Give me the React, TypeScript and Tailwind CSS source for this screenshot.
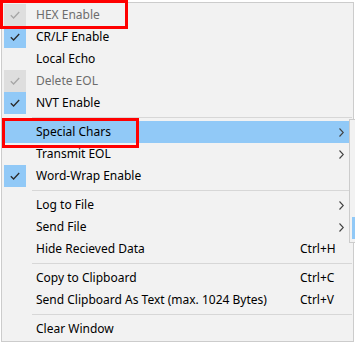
import React from 'react';

type Item =
  | { sep: true }
  | {
      sep?: false;
      label: string;
      check?: 'on' | 'off';
      disabled?: boolean;
      active?: boolean;
      sub?: boolean;
      shortcut?: string;
    };

const items: Item[] = [
  { label: 'HEX Enable', check: 'off', disabled: true },
  { label: 'CR/LF Enable', check: 'on' },
  { label: 'Local Echo' },
  { label: 'Delete EOL', check: 'off', disabled: true },
  { label: 'NVT Enable', check: 'on' },
  { sep: true },
  { label: 'Special Chars', active: true, sub: true },
  { label: 'Transmit EOL', sub: true },
  { label: 'Word-Wrap Enable', check: 'on' },
  { sep: true },
  { label: 'Log to File', sub: true },
  { label: 'Send File', sub: true },
  { label: 'Hide Recieved Data', shortcut: 'Ctrl+H' },
  { sep: true },
  { label: 'Copy to Clipboard', shortcut: 'Ctrl+C' },
  { label: 'Send Clipboard As Text (max. 1024 Bytes)', shortcut: 'Ctrl+V' },
  { sep: true },
  { label: 'Clear Window' },
];

const Check: React.FC<{ muted?: boolean }> = ({ muted }) => (
  <svg width="10" height="8" viewBox="0 0 10 8" fill="none">
    <path
      d="M0.8 4.2 L3.6 7 L9.2 1"
      stroke={muted ? '#a6a6a6' : '#2b2b2b'}
      strokeWidth="1.3"
    />
  </svg>
);

const Chevron: React.FC = () => (
  <svg width="5" height="9" viewBox="0 0 5 9" fill="none">
    <path d="M0.5 0.5 L4.3 4.5 L0.5 8.5" stroke="#404040" strokeWidth="1.1" />
  </svg>
);

const App: React.FC = () => {
  return (
    <div
      className="relative w-[355px] h-[344px] bg-white overflow-hidden"
      style={{ fontFamily: '"Noto Sans", "Liberation Sans", sans-serif' }}
    >
      <div className="ml-[1px] mt-[2px] w-[353px] border border-[#cccccc] bg-[#f2f2f2] py-[1px] text-[12px] text-black">
        {items.map((it, i) =>
          it.sep ? (
            <div key={i} className="h-[7px] flex items-center pl-[30px] pr-[1px]">
              <div className="h-[1px] w-full bg-[#d7d7d7]" />
            </div>
          ) : (
            <div
              key={i}
              className={`flex items-center h-[22px] ${it.active ? 'bg-[#91c9f7]' : ''}`}
            >
              <div className="ml-[2px] w-[22px] h-[22px] flex items-center justify-center">
                {it.check && (
                  <div
                    className={`w-[22px] h-[22px] flex items-center justify-center ${
                      it.disabled ? 'bg-[#dedede]' : 'bg-[#91c9f7]'
                    }`}
                  >
                    <Check muted={it.disabled} />
                  </div>
                )}
              </div>
              <span
                className={`ml-[10px] flex-1 whitespace-nowrap leading-none ${
                  it.disabled ? 'text-[#6d6d6d]' : ''
                }`}
              >
                {it.label}
              </span>
              <span className="w-[37px] whitespace-nowrap leading-none">{it.shortcut}</span>
              <span className="w-[16px] flex items-center pl-[2px]">{it.sub && <Chevron />}</span>
            </div>
          )
        )}
      </div>

      {/* submenu peeking out on the right */}
      <div className="absolute left-[349px] top-[119px] w-[10px] h-[124px] border border-[#cccccc] bg-[#f2f2f2]">
        <div className="absolute left-[2px] top-[97px] w-[8px] h-[22px] bg-[#91c9f7]" />
      </div>

      {/* annotation boxes */}
      <div className="absolute left-0 top-0 w-[128px] h-[29px] border-[3px] border-[#ff0000]" />
      <div className="absolute left-[2px] top-[118px] w-[137px] h-[30px] border-[3px] border-[#ff0000]" />
    </div>
  );
};

export default App;
